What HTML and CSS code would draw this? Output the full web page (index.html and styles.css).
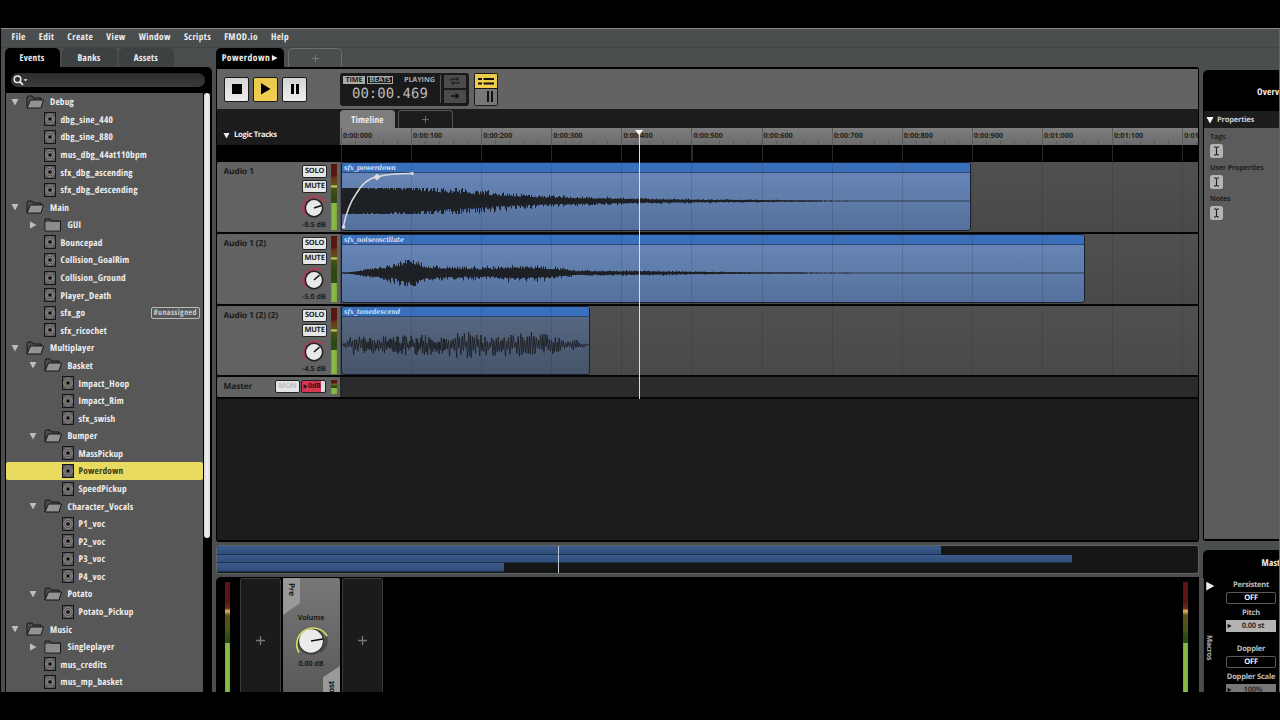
FILE: index.html
```html
<!DOCTYPE html>
<html lang="en">
<head>
  <meta charset="UTF-8">
  <title>Powerdown - Event Editor</title>
  <link rel="stylesheet" href="styles.css">
</head>
<body>
<svg class="defs">
  <symbol id="open" viewBox="0 0 18 14">
    <path d="M1 12.5V2.5L2 1h4l1.500 2H15v3" fill="#4c4c4c" stroke="#161616"/>
    <path d="M1 13L4.500 5H17.500L15 13z" fill="#929292" stroke="#161616"/>
  </symbol>
  <symbol id="closed" viewBox="0 0 18 14">
    <path d="M1 12.500V1h5l1.500 2H16.500V13H1z" fill="#4c4c4c" stroke="#161616"/>
    <path d="M1.500 4H16V12.500H1.500z" fill="#8c8c8c"/>
  </symbol>
  <symbol id="event" viewBox="0 0 12 14">
    <rect x=".5" y=".5" width="11" height="13" fill="#565656" stroke="#161616"/>
    <ellipse cx="6" cy="7" rx="4.300" ry="4.800" fill="none" stroke="#999" stroke-width=".8"/>
    <circle cx="6" cy="7" r="2.700" fill="#3c3c3c" stroke="#999" stroke-width=".8"/>
    <circle cx="6" cy="7" r="1.100" fill="#000"/>
  </symbol>
  <symbol id="down" viewBox="0 0 8 8"><path d="M.5 1h7L4 7.500z" fill="currentColor"/></symbol>
  <symbol id="right" viewBox="0 0 8 8"><path d="M1 .5v7L7.500 4z" fill="currentColor"/></symbol>
  <symbol id="plus" viewBox="0 0 8 8"><path d="M4 0v8M0 4h8" stroke="currentColor" stroke-width="1.200"/></symbol>
  <symbol id="ibeam" viewBox="0 0 13 14">
    <rect width="13" height="14" rx="2.500" fill="#b4b4b4"/>
    <path d="M4 3h1.500l1 .7 1-.7H9M4 11h1.500l1-.7 1 .7H9M6.500 3.500v7" fill="none" stroke="#222" stroke-width="1.200"/>
  </symbol>
</svg>

<div class="app">
  <div class="menu">
    <span>File</span><span>Edit</span><span>Create</span><span>View</span><span>Window</span><span>Scripts</span><span>FMOD.io</span><span>Help</span>
  </div>

  <div class="main">
    <div class="browser">
      <div class="tabs">
        <div class="tab active">Events</div>
        <div class="tab">Banks</div>
        <div class="tab">Assets</div>
      </div>
      <div class="browser-panel">
        <div class="search">
          <svg width="15" height="11" viewBox="0 0 15 11"><circle cx="4.500" cy="4.300" r="3.300" fill="none" stroke="#eee" stroke-width="1.500"/><path d="M7 6.800l3 3" stroke="#eee" stroke-width="1.800"/><path d="M10.500 4.300h4l-2 2z" fill="#eee"/></svg>
        </div>
        <div class="browser-body">
          <div class="tree">
            <div class="row folder"><svg class="arr"><use href="#down"/></svg><svg class="fold"><use href="#open"/></svg>Debug</div>
            <div class="row event"><svg class="ev"><use href="#event"/></svg>dbg_sine_440</div>
            <div class="row event"><svg class="ev"><use href="#event"/></svg>dbg_sine_880</div>
            <div class="row event"><svg class="ev"><use href="#event"/></svg>mus_dbg_44at110bpm</div>
            <div class="row event"><svg class="ev"><use href="#event"/></svg>sfx_dbg_ascending</div>
            <div class="row event"><svg class="ev"><use href="#event"/></svg>sfx_dbg_descending</div>
            <div class="row folder"><svg class="arr"><use href="#down"/></svg><svg class="fold"><use href="#open"/></svg>Main</div>
            <div class="row folder sub"><svg class="arr"><use href="#right"/></svg><svg class="fold"><use href="#closed"/></svg>GUI</div>
            <div class="row event"><svg class="ev"><use href="#event"/></svg>Bouncepad</div>
            <div class="row event"><svg class="ev"><use href="#event"/></svg>Collision_GoalRim</div>
            <div class="row event"><svg class="ev"><use href="#event"/></svg>Collision_Ground</div>
            <div class="row event"><svg class="ev"><use href="#event"/></svg>Player_Death</div>
            <div class="row event"><svg class="ev"><use href="#event"/></svg>sfx_go<span class="tag">#unassigned</span></div>
            <div class="row event"><svg class="ev"><use href="#event"/></svg>sfx_ricochet</div>
            <div class="row folder"><svg class="arr"><use href="#down"/></svg><svg class="fold"><use href="#open"/></svg>Multiplayer</div>
            <div class="row folder sub"><svg class="arr"><use href="#down"/></svg><svg class="fold"><use href="#open"/></svg>Basket</div>
            <div class="row event sub"><svg class="ev"><use href="#event"/></svg>Impact_Hoop</div>
            <div class="row event sub"><svg class="ev"><use href="#event"/></svg>Impact_Rim</div>
            <div class="row event sub"><svg class="ev"><use href="#event"/></svg>sfx_swish</div>
            <div class="row folder sub"><svg class="arr"><use href="#down"/></svg><svg class="fold"><use href="#open"/></svg>Bumper</div>
            <div class="row event sub"><svg class="ev"><use href="#event"/></svg>MassPickup</div>
            <div class="row event sub selected"><svg class="ev"><use href="#event"/></svg>Powerdown</div>
            <div class="row event sub"><svg class="ev"><use href="#event"/></svg>SpeedPickup</div>
            <div class="row folder sub"><svg class="arr"><use href="#down"/></svg><svg class="fold"><use href="#open"/></svg>Character_Vocals</div>
            <div class="row event sub"><svg class="ev"><use href="#event"/></svg>P1_voc</div>
            <div class="row event sub"><svg class="ev"><use href="#event"/></svg>P2_voc</div>
            <div class="row event sub"><svg class="ev"><use href="#event"/></svg>P3_voc</div>
            <div class="row event sub"><svg class="ev"><use href="#event"/></svg>P4_voc</div>
            <div class="row folder sub"><svg class="arr"><use href="#down"/></svg><svg class="fold"><use href="#open"/></svg>Potato</div>
            <div class="row event sub"><svg class="ev"><use href="#event"/></svg>Potato_Pickup</div>
            <div class="row folder"><svg class="arr"><use href="#down"/></svg><svg class="fold"><use href="#open"/></svg>Music</div>
            <div class="row folder sub"><svg class="arr"><use href="#right"/></svg><svg class="fold"><use href="#closed"/></svg>Singleplayer</div>
            <div class="row event"><svg class="ev"><use href="#event"/></svg>mus_credits</div>
            <div class="row event"><svg class="ev"><use href="#event"/></svg>mus_mp_basket</div>
          </div>
          <div class="scroll"></div>
        </div>
      </div>
    </div>

    <div class="center">
      <div class="tabs">
        <div class="tab active event-tab">Powerdown <svg width="7" height="8"><use href="#right"/></svg></div>
        <div class="tab new-tab"><svg width="7" height="7"><use href="#plus"/></svg></div>
      </div>
      <div class="editor">
        <div class="toolbar">
          <div class="btn"><svg width="10" height="10"><rect width="10" height="10"/></svg></div>
          <div class="btn on"><svg width="10" height="12"><path d="M0 0v11.500L9.500 6z"/></svg></div>
          <div class="btn"><svg width="10" height="10"><path d="M1 0h3v10H1zM6 0h3v10H6z"/></svg></div>
          <div class="transport">
            <div class="clock">
              <div class="modes"><span class="mode sel">TIME</span><span class="mode">BEATS</span><span class="state">PLAYING</span></div>
              <div class="time">00:00.469</div>
            </div>
            <div class="loops">
              <div><svg width="10" height="8" viewBox="0 0 10 8"><path d="M1 3.500V2h7M6.500 .3L8.500 2 6.500 3.700M9 4.500V6H2M3.500 4.300L1.500 6l2 1.700" fill="none" stroke="#111"/></svg></div>
              <div><svg width="10" height="8" viewBox="0 0 10 8"><path d="M1 4h7M5.500 1.500L8.500 4 5.500 6.500" fill="none" stroke="#111" stroke-width="1.300"/></svg></div>
            </div>
          </div>
          <div class="views">
            <div class="view on"><svg width="18" height="10"><path d="M1 3h4M6.500 3H17M1 7.500h4M6.500 7.500H17" stroke="#111" stroke-width="2"/></svg></div>
            <div class="view"><svg width="8" height="11"><path d="M2 0v11M6 0v11" stroke="#111" stroke-width="2"/></svg></div>
          </div>
        </div>
        <div class="sheet">
          <div class="sheet-top">
            <div class="logic"><svg width="7" height="7"><use href="#down"/></svg>Logic Tracks</div>
            <div class="sheet-right">
              <div class="sheet-tabs">
                <div class="stab">Timeline</div>
                <div class="stab add"><svg width="7" height="7"><use href="#plus"/></svg></div>
              </div>
              <div class="ruler">
                <span>0:00:000</span><span>0:00:100</span><span>0:00:200</span><span>0:00:300</span><span>0:00:400</span><span>0:00:500</span><span>0:00:600</span><span>0:00:700</span><span>0:00:800</span><span>0:00:900</span><span>0:01:000</span><span>0:01:100</span><span>0:01:200</span>
              </div>
            </div>
          </div>
          <div class="markers"></div>

          <div class="track">
            <div class="head">
              <div class="name">Audio 1</div>
              <div class="controls">
                <div class="sm">SOLO</div><div class="sm">MUTE</div>
                <svg class="knob" viewBox="0 0 26 24"><path d="M4.500 20A11.500 11.500 0 1 1 24 8" fill="none" stroke="#984758" stroke-width="3"/><circle cx="13" cy="13" r="9.500" fill="#222"/><circle cx="13" cy="13" r="7.900" fill="#e8e8e8"/><path d="M13 13l7.500-2.500" stroke="#111" stroke-width="1.500"/></svg>
                <div class="db">-0.5 dB</div>
              </div>
              <div class="meter"><i style="height:27px"></i></div>
            </div>
            <div class="lane">
              <div class="clip one"><div class="clip-name">sfx_powerdown</div><svg class="wave" id="wave1"></svg>
                <svg class="curve" width="80" height="60"><path d="M2 57C6 38 10 30 15 23C21 13 27 7 36 6C45 3 56 2.500 71 2.500" fill="none" stroke="#dcdcdc" stroke-width="1.500"/><path d="M36 2.500l3.500 3.500-3.500 3.500L32.500 6z" fill="#dcdcdc"/><circle cx="71" cy="2.500" r="1.800" fill="#dcdcdc"/><circle cx="2.500" cy="56" r="1.800" fill="#dcdcdc"/></svg>
              </div>
            </div>
          </div>

          <div class="track">
            <div class="head">
              <div class="name">Audio 1 (2)</div>
              <div class="controls">
                <div class="sm">SOLO</div><div class="sm">MUTE</div>
                <svg class="knob" viewBox="0 0 26 24"><path d="M4.500 20A11.500 11.500 0 0 1 20.500 4" fill="none" stroke="#984758" stroke-width="3"/><circle cx="13" cy="13" r="9.500" fill="#222"/><circle cx="13" cy="13" r="7.900" fill="#e8e8e8"/><path d="M13 13l5.500-5" stroke="#111" stroke-width="1.500"/></svg>
                <div class="db">-5.0 dB</div>
              </div>
              <div class="meter"><i style="height:19px"></i></div>
            </div>
            <div class="lane">
              <div class="clip two"><div class="clip-name">sfx_noiseoscillate</div><svg class="wave" id="wave2"></svg></div>
            </div>
          </div>

          <div class="track">
            <div class="head">
              <div class="name">Audio 1 (2) (2)</div>
              <div class="controls">
                <div class="sm">SOLO</div><div class="sm">MUTE</div>
                <svg class="knob" viewBox="0 0 26 24"><path d="M4.500 20A11.500 11.500 0 0 1 21.500 5" fill="none" stroke="#984758" stroke-width="3"/><circle cx="13" cy="13" r="9.500" fill="#222"/><circle cx="13" cy="13" r="7.900" fill="#e8e8e8"/><path d="M13 13l5.500-5" stroke="#111" stroke-width="1.500"/></svg>
                <div class="db">-4.5 dB</div>
              </div>
              <div class="meter"><i style="height:24px"></i></div>
            </div>
            <div class="lane">
              <div class="clip three"><div class="clip-name">sfx_tonedescend</div><svg class="wave" id="wave3"></svg></div>
            </div>
          </div>

          <div class="track master">
            <div class="head">
              <div class="name">Master</div>
              <div class="sm mon">MON</div>
              <div class="sm gain"><svg width="5" height="7"><use href="#right"/></svg>0dB</div>
              <div class="meter"><i style="height:6px"></i></div>
            </div>
            <div class="lane"></div>
          </div>
          <div class="grid"></div>
          <div class="playhead"></div>
        </div>
      </div>

      <div class="overview">
        <div class="ov a"></div><div class="ov b"></div><div class="ov c"></div>
        <div class="ov-head"></div>
      </div>

      <div class="deck">
        <div class="meter big"><i style="height:49px"></i></div>
        <div class="slot"><svg width="9" height="9"><use href="#plus"/></svg></div>
        <div class="fader">
          <div class="flag pre">Pre</div>
          <div class="vol">
            <div>Volume</div>
            <svg width="38" height="36" viewBox="0 0 38 36"><path d="M28 29A15 15 0 0 0 34 14" fill="none" stroke="#4b4b4b" stroke-width="3"/><circle cx="19" cy="18" r="13.500" fill="#3b3b33"/><path d="M7 29.500A16 16 0 1 1 35 13" fill="none" stroke="#d8db6c" stroke-width="1.600"/><circle cx="19" cy="18" r="11.800" fill="#ebebeb"/><path d="M19 18l12-2" stroke="#111" stroke-width="1.500"/></svg>
            <div>0.00 dB</div>
          </div>
          <div class="flag post"><span>Post</span></div>
        </div>
        <div class="slot"><svg width="9" height="9"><use href="#plus"/></svg></div>
        <div class="meter big end"><i style="height:49px"></i></div>
      </div>
    </div>

    <div class="side">
      <div class="props">
        <div class="side-title">Overview</div>
        <div class="props-head"><svg width="8" height="8"><use href="#down"/></svg>Properties</div>
        <div class="props-body">
          <div>Tags</div><svg class="ib"><use href="#ibeam"/></svg>
          <div>User Properties</div><svg class="ib"><use href="#ibeam"/></svg>
          <div>Notes</div><svg class="ib"><use href="#ibeam"/></svg>
        </div>
      </div>
      <div class="macros">
        <div class="side-title low">Master</div>
        <div class="macros-body">
          <div class="macros-bar"><svg width="10" height="10"><use href="#right"/></svg><span>Macros</span></div>
          <div class="macros-list">
            <div class="label">Persistent</div>
            <div class="off">OFF</div>
            <div class="label">Pitch</div>
            <div class="value"><svg width="5" height="6"><use href="#right"/></svg>0.00 st</div>
            <div class="label doppler">Doppler</div>
            <div class="off">OFF</div>
            <div class="label">Doppler Scale</div>
            <div class="value dim"><svg width="5" height="6"><use href="#right"/></svg>100%</div>
          </div>
        </div>
      </div>
    </div>
  </div>
</div>
<script src="waves.js"></script>
</body>
</html>
```

FILE: styles.css
```css
* { margin: 0; padding: 0; box-sizing: border-box; }
body {
  width: 1280px;
  height: 720px;
  background: #000;
  overflow: hidden;
  font-family: "Open Sans", "Noto Sans", sans-serif;
  font-weight: bold;
  font-size: 9.300px;
  text-rendering: geometricPrecision;
  color: #eee;
}
svg { display: block; flex: none; }
.defs { position: absolute; width: 0; height: 0; }

.app {
  margin: 28px 0 0 1px;
  height: 664px;
  background: #4b4e4f;
  border-top: 1px solid #8a8a8a;
  border-right: 1px solid #666;
  overflow: hidden;
}
.menu, .tab, .row, .stab, .side-title { font-stretch: 75%; letter-spacing: .2px; }
.menu {
  display: flex;
  gap: 13.100px;
  height: 19px;
  padding-left: 10.500px;
  line-height: 16px;
  letter-spacing: .4px;
  border-bottom: 1px solid #424545;
}

.main { display: flex; gap: 4px; height: 644px; padding-left: 4px; }
.tabs { display: flex; height: 19px; }
.tab {
  display: flex;
  align-items: center;
  justify-content: center;
  width: 55px;
  padding-right: 1px;
  margin-right: 2px;
  background: #3e4141;
  border-radius: 5px 5px 0 0;
}
.tab.active { background: #000; }

/* event browser */
.browser { width: 207px; flex: none; }
.browser .tab { letter-spacing: .3px; }
.browser-panel { height: 625px; background: #000; border-radius: 0 5px 0 0; padding: 6px 2px 0 1px; }
.search {
  margin: 0 5px 6px 5px;
  height: 14px;
  width: 194px;
  border-radius: 7px;
  background: linear-gradient(#2c2c2c, #3b3b3b);
  padding: 2px 0 0 2px;
}
.browser-body { display: flex; height: 600px; }
.tree { width: 197px; background: #575757; overflow: hidden; }
.row { display: flex; align-items: center; height: 17.590px; }
.row .arr { width: 8px; height: 8px; color: #bdbdbd; margin: 0 7px 0 5px; }
.row .fold { width: 18px; height: 14px; margin-right: 6px; }
.row .ev { width: 12px; height: 14px; margin-right: 5px; }
.row.event { padding-left: 37.500px; }
.row.folder.sub { padding-left: 17.500px; }
.row.event.sub { padding-left: 55.500px; }
.row.selected { background: #e8db60; color: #3f3b14; border-radius: 2px; }
.tag {
  margin: 0 3px 0 auto;
  height: 12px;
  border: 1px solid #bbb;
  border-radius: 2px;
  color: #ccc;
  font-size: 8px;
  line-height: 9px;
  letter-spacing: .4px;
  padding: 0 2px;
}
.scroll { width: 6px; height: 445px; margin-left: 1px; border-radius: 3px; background: linear-gradient(90deg, #d8d8d8, #f0f0f0, #d8d8d8); }

/* editor */
.center { width: 983px; flex: none; }
.event-tab { width: 68px; padding: 0; gap: 1px; margin-right: 4px; font-size: 9.600px; letter-spacing: .45px; }
.new-tab { width: 54px; padding: 0; background: none; border: 1px solid #6b6e6e; border-bottom: 0; color: #777; }
.editor { height: 475px; background: #000; border-radius: 0 3px 3px 3px; padding: 2px 1px 2px 1px; overflow: hidden; }
.toolbar { display: flex; align-items: center; height: 40px; padding-left: 7px; background: #636363; }
.btn {
  width: 25px;
  height: 25px;
  margin-right: 4px;
  display: flex;
  align-items: center;
  justify-content: center;
  background: linear-gradient(#d4d4d4, #ededed);
  border: 1px solid #1a1a1a;
  border-radius: 2px;
}
.btn.on, .view.on { background: linear-gradient(#e9c94d, #f2cf52); }
.transport { display: flex; width: 129px; height: 33px; margin: 0 5px 0 29px; background: #1a1a1a; border-radius: 3px; padding: 2px 3px; }
.clock { width: 99px; height: 28px; border-right: 1px solid #555; }
.modes { display: flex; padding-top: 1px; font-size: 7.200px; letter-spacing: -.1px; line-height: 8px; color: #aaa; }
.mode { width: 22px; text-align: center; border: 1px solid #aaa; height: 8px; line-height: 6px; margin-right: 2px; }
.mode + .mode { width: 26px; }
.mode.sel { background: #aaa; color: #222; }
.state { margin-left: 9px; }
.time { font: 14px/21px "DejaVu Sans Mono", monospace; color: #bbb; padding-left: 9px; }
.loops { margin-left: 3px; }
.loops div { display: flex; align-items: center; justify-content: center; width: 22px; height: 13px; margin-bottom: 2px; background: #4b4b4b; border-radius: 1px; }
.views { width: 24px; height: 33px; border: 1px solid #1a1a1a; border-radius: 2px; }
.view { height: 15px; display: flex; align-items: center; justify-content: center; border-bottom: 1px solid #1a1a1a; }
.view + .view { height: 16px; border: 0; background: #777; justify-content: flex-end; padding-right: 3px; }

.sheet { position: relative; height: 431px; background: #1c1c1c; overflow: hidden; }
.sheet-top { display: flex; height: 36px; }
.logic { width: 123px; display: flex; gap: 4px; align-items: center; padding: 16px 0 0 6px; font-size: 7.700px; letter-spacing: -.35px; }
.sheet-right { width: 858px; }
.sheet-tabs { display: flex; height: 19px; padding-top: 1px; }
.stab { width: 55px; line-height: 19px; text-align: center; background: #7d7d7d; border-radius: 4px 4px 0 0; }
.stab.add { display: flex; align-items: center; justify-content: center; margin-left: 3px; border: 1px solid #555; border-bottom: 0; background: none; color: #666; }
.ruler {
  display: flex;
  height: 17px;
  padding-left: 1px;
  overflow: hidden;
  background: linear-gradient(#7e7e7e, #6b6b6b);
  color: #1f1f1f;
  font-size: 7.300px;
  line-height: 16px;
}
.ruler span {
  flex: 0 0 70.100px;
  padding-left: 1px;
  border-left: 1px solid #595959;
  background: repeating-linear-gradient(90deg, transparent 0 13px, #5a5a5a 13px 14px) 0 100% / 100% 4px no-repeat;
}
.markers { height: 17px; background: #000; }

.track { display: flex; height: 71.800px; border-bottom: 2px solid #050505; }
.head { width: 123px; flex: none; display: flex; background: #626262; color: #1b1b1b; padding: 2px 3px 0 6.500px; border-radius: 2px 0 0 2px; }
.name { flex: 1; font-size: 8.300px; line-height: 15px; letter-spacing: -.1px; white-space: nowrap; }
.controls { width: 26px; margin-right: 4px; padding-top: 1px; }
.sm {
  width: 25px;
  height: 13px;
  margin: 0 0 2px 1px;
  background: #e6e6e6;
  border: 1px solid #222;
  border-radius: 2px;
  color: #1c1c1c;
  font-size: 7.400px;
  letter-spacing: -.2px;
  line-height: 11px;
  text-align: center;
}
.knob { width: 26px; height: 24px; }
.db { font-size: 7.200px; line-height: 13px; text-align: center; white-space: nowrap; }
.meter {
  display: flex;
  align-items: flex-end;
  width: 6px;
  height: 66px;
  background: linear-gradient(#5a1612 0 18%, #6b3212 20%, #5b5416 32%, #c8cc55 33% 35%, #4c5216 36%, #2c4a12 50%);
}
.meter i { width: 6px; background: linear-gradient(90deg, #76a83c, #8ec046, #76a83c); }
.lane { flex: 1; background: linear-gradient(#505050, #494949); padding-left: 1px; }
.clip { position: relative; height: 69px; border: 1px solid #16202f; border-radius: 3px; background: linear-gradient(#6a89ba, #55719d); }
.clip-name {
  height: 10px;
  padding-left: 2px;
  border-bottom: 1px solid #2b456e;
  border-radius: 2px 2px 0 0;
  background: #3a70bb;
  color: #c9dcf6;
  font: italic bold 7px/9px "DejaVu Serif Condensed", "DejaVu Serif", serif;
  font-stretch: condensed;
  letter-spacing: -.1px;
}
.one { width: 630px; }
.two { width: 744px; }
.three { width: 249px; background: linear-gradient(#596a85, #46546a); }
.wave { width: 100%; height: 57px; }
.curve { position: absolute; left: -1px; top: 8px; }
.master { height: 22px; }
.master .head { padding: 2px 3px 0 6.500px; }
.master .lane { background: #2b2b2b; }
.mon { color: #bdbdbd; width: 25px; margin-top: 1px; }
.gain { display: flex; align-items: center; margin-top: 1px; padding-left: 1px; margin-right: 5px; background: linear-gradient(90deg, #d93450 82%, #ddd 82%); font-size: 7px; }
.master .meter { height: 14px; margin-top: 1px; }

.grid {
  position: absolute;
  left: 123px;
  top: 36px;
  width: 858px;
  height: 253px;
  background:
    repeating-linear-gradient(90deg, #2a2a2a 0 1px, transparent 1px 70.100px) 1px 0 / 100% 16px no-repeat,
    repeating-linear-gradient(90deg, rgba(20,20,20,.14) 0 1px, transparent 1px 70.100px) 1px 0;
}
.playhead { position: absolute; left: 422px; top: 21px; width: 1px; height: 269px; background: #ddd; }
.playhead::before { content: ""; position: absolute; left: -4px; top: 0; border: 4.500px solid transparent; border-top: 5px solid #fff; border-bottom: 0; }

.overview { position: relative; height: 29px; margin: 3px 0; border: 1px solid #5f6362; border-radius: 3px; background: #161616; overflow: hidden; }
.ov { height: 8.500px; background: linear-gradient(#3a5b8c, #304d78); border-bottom: 1px solid #1e3150; }
.ov.a { width: 724px; }
.ov.b { width: 855px; }
.ov.c { width: 287px; }
.ov-head { position: absolute; left: 341px; top: 0; width: 1px; height: 27px; background: #b9c4d4; }

.deck { display: flex; height: 115px; background: #000; border-radius: 5px 0 0 0; padding: 1px 11px 0 9px; overflow: hidden; }
.meter.big { width: 5px; height: 110px; margin: 4px 10px 0 0; background: linear-gradient(#5a1612 0 18%, #6b3212 24%, #d7a85a 26% 27%, #5b5416 30%, #4c5216 44%, #2c4a12 50%); }
.meter.big i { width: 5px; }
.meter.end { margin: 4px 0 0 auto; }
.slot { width: 41px; height: 130px; border: 1px solid #3b3b3b; border-radius: 2px; background: #1b1b1b; color: #777; padding: 57px 0 0 15px; }
.fader { position: relative; width: 57px; height: 130px; margin: 0 2px; border-radius: 2px; background: linear-gradient(#777, #555); color: #1c1c1c; }
.vol { display: flex; flex-direction: column; align-items: center; padding: 35px 1px 0 0; font-size: 7.200px; letter-spacing: -.1px; line-height: 11px; }
.vol svg { margin: -1px 0 0; }
.flag { position: absolute; width: 17px; background: #999; writing-mode: vertical-rl; font-size: 8px; line-height: 17px; letter-spacing: -.2px; }
.pre { left: 0; top: 0; height: 37px; padding-top: 5px; clip-path: polygon(0 0, 100% 0, 100% 68%, 0 100%); }
.post { right: 0; top: 88px; height: 42px; padding-top: 15px; clip-path: polygon(0 27%, 100% 0, 100% 100%, 0 100%); }
.post span { display: inline-block; transform: rotate(180deg); }

/* right column */
.side { width: 77px; flex: none; overflow: hidden; padding-top: 22px; }
.props { width: 140px; height: 471px; margin-bottom: 9px; padding: 0 0 2px 1px; border-radius: 5px 0 0 3px; background: #000; }
.side-title { height: 41px; line-height: 43px; padding-left: 53px; }
.props-head { display: flex; align-items: center; gap: 3px; height: 17px; padding-left: 2px; font-size: 7.500px; letter-spacing: -.2px; background: #1d1d1d; color: #ccc; }
.props-head svg { color: #fff; }
.props-body { height: 411px; padding: 3px 0 0 6px; background: #5b5b5b; color: #222; font-size: 7.200px; line-height: 13px; letter-spacing: -.15px; }
.ib { width: 13px; height: 14px; margin: 0 0 4px; }
.macros { width: 140px; height: 142px; border-radius: 5px 0 0 0; background: #000; }
.side-title.low { height: 28px; line-height: 25px; padding-left: 58.500px; }
.macros-body { display: flex; }
.macros-bar { width: 23px; height: 120px; padding: 3px 0 0 1px; border-left: 1px solid #444; }
.macros-bar span { display: block; margin: 44px 0 0 -1px; writing-mode: vertical-rl; font-size: 7.500px; line-height: 10px; letter-spacing: -.35px; color: #aaa; }
.macros-list { width: 50px; text-align: center; font-size: 7.600px; letter-spacing: -.25px; }
.label { height: 13px; line-height: 14px; color: #bbb; margin: 0 -6px 1px; white-space: nowrap; }
.off { height: 12px; line-height: 11px; border: 1px solid #5a5a5a; border-radius: 2px; margin-bottom: 2px; }
.value { position: relative; height: 12px; margin-top: 1px; line-height: 13px; padding-left: 4px; background: #b4b4b4; color: #333; }
.value svg { position: absolute; left: 1px; top: 3px; color: #111; }
.doppler { margin-top: 10px; }
.value.dim { background: #777; }
```

FILE: waves.js
```js
// small seeded generator so the waveforms are the same on each load
let seed = 7;
function rnd() {
  seed = (seed * 16807) % 2147483647;
  return seed / 2147483647;
}

// amplitude at x, from a list of [x, amplitude] points
function level(points, x) {
  for (let i = 1; i < points.length; i++) {
    const [x0, a0] = points[i - 1];
    const [x1, a1] = points[i];
    if (x <= x1) return a0 + (a1 - a0) * (x - x0) / (x1 - x0);
  }
  return 0;
}

function show(id, d, width) {
  document.getElementById(id).innerHTML =
    '<path d="' + d + '" fill="none" stroke="#1d2024" stroke-width="' + width + '"/>';
}

function bars(id, mid, end, clip, points) {
  let d = '';
  for (let x = 0.5; x < end; x++) {
    const a = level(points, x);
    if (a < 0.5 && rnd() > a) continue;
    const up = Math.min(clip, a * (0.62 + rnd() * rnd() * 0.8));
    const down = Math.min(clip, a * (0.62 + rnd() * rnd() * 0.8));
    d += 'M' + x + ' ' + (mid - up).toFixed(1) + 'V' + (mid + down).toFixed(1);
  }
  show(id, d, 1.05);
  document.getElementById(id).innerHTML += '<path d="M0 ' + mid + 'H' + end + '" stroke="#1d2024" stroke-width=".7"/>';
}

bars('wave1', 28, 630, 13, [[0, 20], [65, 17.5], [95, 14], [140, 10], [165, 7.5], [200, 5.5], [240, 4], [300, 2.5], [350, 1.8], [420, 1.1], [470, 0.6], [500, 0.3], [530, 0]]);
bars('wave2', 28, 743, 13, [[0, 0.5], [8, 1], [30, 5.2], [52, 8], [66, 14], [74, 13], [84, 7.5], [130, 5.5], [150, 5.5], [170, 7.5], [200, 6.5], [220, 4.5], [235, 2.7], [300, 2.2], [370, 1.3], [430, 0.7], [500, 0.3], [530, 0]]);

const tone = [[0, 2], [8, 11], [30, 9], [60, 10], [100, 10], [120, 14], [132, 13], [150, 11], [170, 13], [186, 14], [210, 11], [225, 7], [240, 4], [247, 0]];
let d = 'M0 28';
let side = 1;
for (let x = 1; x < 246; x += (x > 20 && x < 105 ? 0.5 : 0.8) + rnd() * 0.6) {
  side = -side;
  d += 'L' + x.toFixed(1) + ' ' + (28 + side * level(tone, x) * (0.15 + 0.85 * rnd())).toFixed(1);
}
show('wave3', d + 'L248 28', 0.9);
```
